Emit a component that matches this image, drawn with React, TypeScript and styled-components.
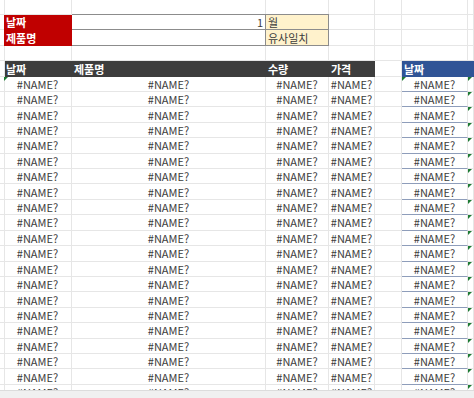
import styled, { createGlobalStyle } from 'styled-components';

const COLS = '4px 68px 194px 63px 46px 27px 66px 1fr';
const GRID = '#e6e6e6';
const DATA_ROWS = 21;

const GlobalStyle = createGlobalStyle`
  html, body {
    margin: 0;
    padding: 0;
    background: #ffffff;
    width: 474px;
    height: 398px;
    overflow: hidden;
  }
  body {
    font-family: "Noto Sans CJK KR", "Noto Sans", sans-serif;
    font-size: 11px;
    color: #3c3c3c;
  }
`;

type CellProps = {
  $bg?: string;
  $align?: 'left' | 'center' | 'right';
  $color?: string;
  $bold?: boolean;
  $frame?: boolean;
  $line?: string;
  $under?: string;
  $flag?: boolean;
};

export default function App() {
  const rows = Array.from({ length: DATA_ROWS }, (_, i) => i);

  return (
    <>
      <GlobalStyle />
      <Page>
        <Sheet>
          <Row $h={15}>{emptyCells(8)}</Row>

          <Row>
            <Cell />
            <Cell $bg="#c00000" $color="#ffffff" $bold $line="#c00000">
              날짜
            </Cell>
            <Cell $frame $align="right">
              1
            </Cell>
            <Cell $frame $bg="#fff2cc">
              월
            </Cell>
            {emptyCells(4)}
          </Row>

          <Row>
            <Cell />
            <Cell $bg="#c00000" $color="#ffffff" $bold $line="#c00000">
              제품명
            </Cell>
            <Cell $frame />
            <Cell $frame $bg="#fff2cc">
              유사일치
            </Cell>
            {emptyCells(4)}
          </Row>

          <Row>{emptyCells(8)}</Row>

          <Row>
            <Cell />
            <HeaderCell>날짜</HeaderCell>
            <HeaderCell>제품명</HeaderCell>
            <HeaderCell>수량</HeaderCell>
            <HeaderCell>가격</HeaderCell>
            <Cell />
            <HeaderCell $blue>날짜</HeaderCell>
            <HeaderCell $blue />
          </Row>

          {rows.map((i) => (
            <Row key={i}>
              <Cell />
              <Cell $align="center" $flag={i === 0}>
                #NAME?
              </Cell>
              <Cell $align="center">#NAME?</Cell>
              <Cell $align="center">#NAME?</Cell>
              <Cell $align="center">#NAME?</Cell>
              <Cell />
              <Cell $align="center" $flag={i === 0} $under="#8e9dba">
                #NAME?
              </Cell>
              <Cell $flag />
            </Row>
          ))}
        </Sheet>
        <BottomBar />
      </Page>
    </>
  );
}

function emptyCells(n: number) {
  return Array.from({ length: n }, (_, i) => <Cell key={i} />);
}

const Page = styled.div`
  display: flex;
  flex-direction: column;
  width: 474px;
  height: 398px;
  overflow: hidden;
`;

const Sheet = styled.div`
  display: flex;
  flex-direction: column;
  height: 390px;
  overflow: hidden;
  flex-shrink: 0;
`;

const Row = styled.div<{ $h?: number }>`
  display: grid;
  grid-template-columns: ${COLS};
  height: ${(p) => p.$h ?? 15.42}px;
  flex-shrink: 0;
`;

const Cell = styled.div<CellProps>`
  position: relative;
  box-sizing: border-box;
  min-width: 0;
  padding: 0 2px;
  white-space: nowrap;
  line-height: 14px;
  display: flex;
  align-items: center;
  justify-content: ${(p) =>
    p.$align === 'center' ? 'center' : p.$align === 'right' ? 'flex-end' : 'flex-start'};
  background: ${(p) => p.$bg ?? 'transparent'};
  color: ${(p) => p.$color ?? '#3c3c3c'};
  font-weight: ${(p) => (p.$bold ? 700 : 400)};
  border-right: 1px solid ${(p) => (p.$frame ? '#8c8c8c' : p.$line ?? GRID)};
  border-bottom: 1px solid
    ${(p) => (p.$frame ? '#8c8c8c' : p.$under ?? p.$line ?? GRID)};
  ${(p) => (p.$frame ? 'box-shadow: 0 -1px 0 #8c8c8c;' : '')}

  &::before {
    content: '';
    display: ${(p) => (p.$flag ? 'block' : 'none')};
    position: absolute;
    left: 0;
    top: 0;
    width: 0;
    height: 0;
    border-top: 4px solid #1e7b34;
    border-right: 4px solid transparent;
  }
`;

const HeaderCell = styled.div<{ $blue?: boolean }>`
  box-sizing: border-box;
  display: flex;
  align-items: center;
  padding: 0 2px;
  white-space: nowrap;
  color: #ffffff;
  font-weight: 700;
  background: ${(p) => (p.$blue ? '#305496' : '#3d3d3d')};
`;

const BottomBar = styled.div`
  flex: 1;
  background: #f0f0f0;
  border-top: 1px solid #dcdcdc;
`;
